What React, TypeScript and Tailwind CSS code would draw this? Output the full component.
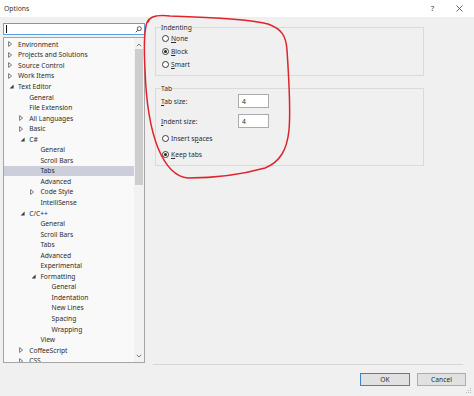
import React from "react";

type Kind = "c" | "e" | "n";
const tree: [string, number, Kind][] = [
  ["Environment", 0, "c"],
  ["Projects and Solutions", 0, "c"],
  ["Source Control", 0, "c"],
  ["Work Items", 0, "c"],
  ["Text Editor", 0, "e"],
  ["General", 1, "n"],
  ["File Extension", 1, "n"],
  ["All Languages", 1, "c"],
  ["Basic", 1, "c"],
  ["C#", 1, "e"],
  ["General", 2, "n"],
  ["Scroll Bars", 2, "n"],
  ["Tabs", 2, "n"],
  ["Advanced", 2, "n"],
  ["Code Style", 2, "c"],
  ["IntelliSense", 2, "n"],
  ["C/C++", 1, "e"],
  ["General", 2, "n"],
  ["Scroll Bars", 2, "n"],
  ["Tabs", 2, "n"],
  ["Advanced", 2, "n"],
  ["Experimental", 2, "n"],
  ["Formatting", 2, "e"],
  ["General", 3, "n"],
  ["Indentation", 3, "n"],
  ["New Lines", 3, "n"],
  ["Spacing", 3, "n"],
  ["Wrapping", 3, "n"],
  ["View", 2, "n"],
  ["CoffeeScript", 1, "c"],
  ["CSS", 1, "c"],
];

function Collapsed() {
  return (
    <svg width="5" height="6" viewBox="0 0 5 6" className="block">
      <path d="M0.6 0.6 L3.6 3 L0.6 5.4 Z" fill="none" stroke="#6a6a6a" strokeWidth="0.9" />
    </svg>
  );
}

function Expanded() {
  return (
    <svg width="6" height="5" viewBox="0 0 6 5" className="block">
      <path d="M4.6 0.4 L4.6 4.4 L0.6 4.4 Z" fill="#3a3a3a" />
    </svg>
  );
}

function Radio({ checked, children }: { checked?: boolean; children: React.ReactNode }) {
  return (
    <div className="flex items-center gap-[2px]">
      <div className="ml-[1px] w-[7px] h-[7px] rounded-full border border-[#3a3a3a] bg-white flex items-center justify-center">
        {checked && <div className="w-[3px] h-[3px] rounded-full bg-[#222]" />}
      </div>
      <span>{children}</span>
    </div>
  );
}

export default function App() {
  return (
    <div className="relative w-[474px] h-[396px] overflow-hidden bg-[#f0f0f0] text-[#2b2b2b] font-['Noto_Sans',sans-serif] text-[6.7px] leading-[9px]">
      {/* Title bar */}
      <div className="h-[17px] bg-white flex items-center pl-[4px]">
        <span className="text-[#333] text-[6.8px]">Options</span>
        <span className="ml-auto text-[#333] text-[7px] mr-[22px]">?</span>
        <svg width="7" height="7" viewBox="0 0 7 7" className="mr-[11px]">
          <path d="M0.5 0.5 L6.5 6.5 M6.5 0.5 L0.5 6.5" stroke="#444" strokeWidth="0.8" />
        </svg>
      </div>

      {/* Main */}
      <div className="flex h-[346px]">
        {/* Left column */}
        <div className="w-[145px] pl-[3px] pt-[6px] flex flex-col">
          <div className="h-[12px] bg-white border border-[#5ea0e4] flex items-center pl-[2px] pr-[2px]">
            <div className="w-px h-[8px] bg-[#111]" />
            <svg width="7" height="7" viewBox="0 0 7 7" className="ml-auto">
              <circle cx="4.3" cy="2.7" r="2" fill="none" stroke="#444" strokeWidth="0.9" />
              <path d="M2.8 4.2 L0.8 6.2" stroke="#444" strokeWidth="1" />
            </svg>
          </div>
          <div className="mt-[2px] flex-1 border border-[#a5a5a5] bg-[#f9f9f9] flex overflow-hidden">
            <div className="flex-1 pt-[1px]">
              {tree.map(([label, level, kind], i) => {
                const textX = 18 + 11.2 * level;
                const selected = i === 12;
                return (
                  <div
                    key={i}
                    className={`h-[10.55px] flex items-center ${selected ? "bg-[#cccedb]" : ""}`}
                    style={{ paddingLeft: textX - 4 - 10 }}
                  >
                    <div className="w-[10px] h-full flex items-center">
                      {kind === "c" && (
                        <div className="pl-[0px]">
                          <Collapsed />
                        </div>
                      )}
                      {kind === "e" && (
                        <div className="pl-[1px]">
                          <Expanded />
                        </div>
                      )}
                    </div>
                    <span className="whitespace-nowrap">{label}</span>
                  </div>
                );
              })}
            </div>
            {/* Scrollbar */}
            <div className="w-[10px] flex flex-col items-center bg-[#f2f2f2]">
              <svg width="6" height="4" viewBox="0 0 6 4" className="mt-[5px]">
                <path d="M0.8 3.2 L3 1 L5.2 3.2" fill="none" stroke="#6a6a6a" strokeWidth="0.9" />
              </svg>
              <div className="mt-[2px] w-[8px] h-[136px] bg-[#cdcdcd]" />
              <svg width="6" height="4" viewBox="0 0 6 4" className="mt-auto mb-[4px]">
                <path d="M0.8 0.8 L3 3 L5.2 0.8" fill="none" stroke="#6a6a6a" strokeWidth="0.9" />
              </svg>
            </div>
          </div>
        </div>

        {/* Right panel */}
        <div className="pl-[10px] pt-[6px] flex flex-col">
          <fieldset className="w-[269px] border border-[#dadada] px-[5px] pb-[4px]">
            <legend className="px-0">Indenting</legend>
            <div className="h-[13px] flex items-center">
              <Radio>
                <u>N</u>one
              </Radio>
            </div>
            <div className="h-[13px] flex items-center">
              <Radio checked>
                <u>B</u>lock
              </Radio>
            </div>
            <div className="h-[13px] flex items-center">
              <Radio>
                <u>S</u>mart
              </Radio>
            </div>
          </fieldset>

          <fieldset className="mt-[8px] w-[269px] border border-[#dadada] px-[5px] pb-[4px]">
            <legend className="px-0">Tab</legend>
            <div className="h-[14px] flex items-center mt-[1px]">
              <span className="w-[77px]">
                <u>T</u>ab size:
              </span>
              <div className="w-[31px] h-[14px] bg-white border border-[#ababab] flex items-center pl-[3px]">4</div>
            </div>
            <div className="h-[14px] flex items-center mt-[6px]">
              <span className="w-[77px]">
                <u>I</u>ndent size:
              </span>
              <div className="w-[31px] h-[14px] bg-white border border-[#ababab] flex items-center pl-[3px]">4</div>
            </div>
            <div className="h-[14px] flex items-center mt-[3px]">
              <Radio>
                Insert s<u>p</u>aces
              </Radio>
            </div>
            <div className="h-[14px] flex items-center mt-[2px]">
              <Radio checked>
                <u>K</u>eep tabs
              </Radio>
            </div>
          </fieldset>
        </div>
      </div>

      {/* Footer */}
      <div className="mt-[1px] ml-[153px] w-[310px] h-px bg-[#d6d6d6]" />
      <div className="mt-[8px] flex justify-end pr-[8px] gap-[7px]">
        <div className="w-[50px] h-[13px] bg-[#e1e1e1] border border-[#3b84c7] flex items-center justify-center">OK</div>
        <div className="w-[49px] h-[13px] bg-[#e1e1e1] border border-[#adadad] flex items-center justify-center">Cancel</div>
      </div>

      {/* Resize grip */}
      <svg width="6" height="6" viewBox="0 0 6 6" className="absolute right-[2px] bottom-[2px]">
        <rect x="4" y="0" width="1" height="1" fill="#b8b8b8" />
        <rect x="2" y="2" width="1" height="1" fill="#b8b8b8" />
        <rect x="4" y="2" width="1" height="1" fill="#b8b8b8" />
        <rect x="0" y="4" width="1" height="1" fill="#b8b8b8" />
        <rect x="2" y="4" width="1" height="1" fill="#b8b8b8" />
        <rect x="4" y="4" width="1" height="1" fill="#b8b8b8" />
      </svg>

      {/* Red annotation */}
      <svg
        width="474"
        height="396"
        viewBox="0 0 474 396"
        className="absolute left-0 top-0 pointer-events-none"
      >
        <path
          d="M148 22 C150 15 160 15 170 16 C200 17 250 19 268 24 C282 29 286 36 287 50 C289 80 291 110 289 130 C287 150 280 162 265 168 C240 175 210 178 188 178 C175 177 165 165 158 148 C150 128 146 100 145 70 C144 50 144 35 146 26 C147 20 150 17 156 16"
          fill="none"
          stroke="#e0232b"
          strokeWidth="1.5"
          strokeLinecap="round"
        />
      </svg>
    </div>
  );
}
